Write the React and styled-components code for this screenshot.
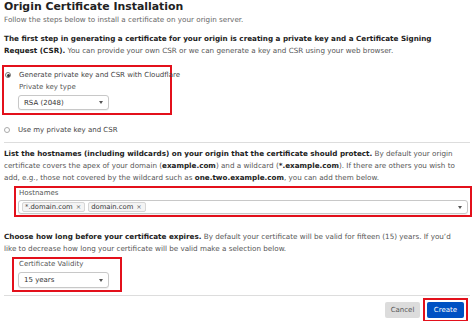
import React from "react";
import styled, { createGlobalStyle } from "styled-components";

const Global = createGlobalStyle`
  html, body { margin: 0; padding: 0; background: #fff; }
  body { font-family: "DejaVu Sans", "Liberation Sans", sans-serif; color: #555; }
  * { box-sizing: border-box; }
`;

const Page = styled.div`
  width: 474px;
  height: 321px;
  overflow: hidden;
  padding: 0 4px;
`;

const Title = styled.h1`
  margin: 0;
  font-size: 10.9px;
  line-height: 13px;
  font-weight: bold;
  color: #222;
`;

const Subtitle = styled.p`
  margin: 1px 0 0;
  font-size: 7.2px;
  line-height: 12px;
  color: #666;
  white-space: nowrap;
`;

const Paragraph = styled.p`
  margin: ${(p) => p.$top}px 0 0;
  font-size: 7.2px;
  line-height: 12px;
  color: #555;
  white-space: nowrap;
  b { color: #222; font-weight: bold; }
`;

const Highlight = styled.div`
  border: 2px solid #e3101b;
  margin: ${(p) => p.$top}px 0 0 ${(p) => p.$left}px;
  width: ${(p) => p.$width}px;
  padding: ${(p) => p.$pad};
  display: flex;
  flex-direction: column;
`;

const RadioRow = styled.label`
  display: grid;
  grid-template-columns: 6px 1fr;
  column-gap: 8px;
  align-items: center;
  height: 12px;
  margin-top: ${(p) => p.$top || 0}px;
  padding-left: ${(p) => p.$indent || 0}px;
  font-size: 7px;
  color: #444;
  white-space: nowrap;
`;

const Radio = styled.span`
  width: 6px;
  height: 6px;
  border-radius: 50%;
  border: 1px solid ${(p) => (p.$checked ? "#777" : "#aaa")};
  background: #fff;
  display: flex;
  align-items: center;
  justify-content: center;
  &::after {
    content: "";
    width: 3px;
    height: 3px;
    border-radius: 50%;
    background: ${(p) => (p.$checked ? "#333" : "transparent")};
  }
`;

const FieldLabel = styled.div`
  margin: ${(p) => p.$top || 0}px 0 0 ${(p) => p.$left || 0}px;
  font-size: 7px;
  line-height: 11px;
  color: #555;
  padding-left: 1px;
  white-space: nowrap;
`;

const Select = styled.div`
  margin: ${(p) => p.$top || 0}px 0 0 ${(p) => p.$left || 0}px;
  width: 91px;
  height: ${(p) => p.$height}px;
  border: 1px solid #c8c8c8;
  border-radius: 3px;
  box-shadow: 0 1px 1px rgba(0, 0, 0, 0.06);
  background: #fff;
  display: flex;
  align-items: center;
  justify-content: space-between;
  padding: 0 5px 0 5px;
  font-size: 7px;
  color: #333;
  white-space: nowrap;
`;

const Caret = styled.span`
  width: 0;
  height: 0;
  border-left: 2.5px solid transparent;
  border-right: 2.5px solid transparent;
  border-top: 3px solid #555;
`;

const Divider = styled.hr`
  margin: ${(p) => p.$top}px 0 0;
  border: 0;
  height: 1px;
  background: #ddd;
  width: 466px;
`;

const MultiSelect = styled.div`
  margin-top: 1px;
  height: 14px;
  border: 1px solid #c8c8c8;
  border-radius: 3px;
  box-shadow: 0 1px 1px rgba(0, 0, 0, 0.06);
  display: flex;
  align-items: center;
  gap: 3px;
  padding: 0 5px 0 3px;
`;

const Chip = styled.span`
  height: 10px;
  display: inline-flex;
  align-items: center;
  gap: 3px;
  padding: 0 3px 0 2px;
  border: 1px solid #d6d6d6;
  border-radius: 2px;
  background: #f4f4f4;
  font-size: 6.8px;
  color: #333;
  white-space: nowrap;
`;

const ChipX = styled.span`
  font-size: 6.5px;
  color: #666;
`;

const Spacer = styled.span`
  flex: 1;
`;

const Footer = styled.div`
  margin-top: 2px;
  display: flex;
  justify-content: flex-end;
  align-items: center;
  gap: 3px;
  padding-right: 2px;
`;

const ButtonFrame = styled.div`
  border: 2px solid #e3101b;
  padding: 2px;
  display: flex;
`;

const Button = styled.button`
  height: 16px;
  width: ${(p) => p.$width}px;
  padding: 0;
  border: 0;
  border-radius: 2px;
  font-family: inherit;
  font-size: 7px;
  background: ${(p) => (p.$primary ? "#0051c3" : "#dcdcdc")};
  color: ${(p) => (p.$primary ? "#fff" : "#555")};
`;

export default function App() {
  return (
    <>
      <Global />
      <Page>
        <Title>Origin Certificate Installation</Title>
        <Subtitle>Follow the steps below to install a certificate on your origin server.</Subtitle>
        <Paragraph $top={7}>
          <b>The first step in generating a certificate for your origin is creating a private key and a Certificate Signing</b>
          <br />
          <b>Request (CSR).</b> You can provide your own CSR or we can generate a key and CSR using your web browser.
        </Paragraph>

        <Highlight $top={8} $left={-2} $width={170} $pad="2px 0 3px 1px">
          <RadioRow>
            <Radio $checked />
            <span>Generate private key and CSR with Cloudflare</span>
          </RadioRow>
          <FieldLabel $top={1} $left={13}>Private key type</FieldLabel>
          <Select $top={2} $left={13} $height={15}>
            <span>RSA (2048)</span>
            <Caret />
          </Select>
        </Highlight>

        <RadioRow $top={9}>
          <Radio />
          <span>Use my private key and CSR</span>
        </RadioRow>

        <Divider $top={6} />

        <Paragraph $top={5}>
          <b>List the hostnames (including wildcards) on your origin that the certificate should protect.</b> By default your origin
          <br />
          certificate covers the apex of your domain (<b>example.com</b>) and a wildcard (<b>*.example.com</b>). If there are others you wish to
          <br />
          add, e.g., those not covered by the wildcard such as <b>one.two.example.com</b>, you can add them below.
        </Paragraph>

        <Highlight $top={2} $left={10} $width={458} $pad="0 2px 1px 2px">
          <FieldLabel>Hostnames</FieldLabel>
          <MultiSelect>
            <Chip>*.domain.com <ChipX>×</ChipX></Chip>
            <Chip>domain.com <ChipX>×</ChipX></Chip>
            <Spacer />
            <Caret />
          </MultiSelect>
        </Highlight>

        <Paragraph $top={14}>
          <b>Choose how long before your certificate expires.</b> By default your certificate will be valid for fifteen (15) years. If you’d
          <br />
          like to decrease how long your certificate will be valid make a selection below.
        </Paragraph>

        <Highlight $top={2} $left={8} $width={110} $pad="0 0 2px 4px">
          <FieldLabel>Certificate Validity</FieldLabel>
          <Select $top={2} $height={16}>
            <span>15 years</span>
            <Caret />
          </Select>
        </Highlight>

        <Divider $top={3} />

        <Footer>
          <Button $width={35}>Cancel</Button>
          <ButtonFrame>
            <Button $primary $width={37}>Create</Button>
          </ButtonFrame>
        </Footer>
      </Page>
    </>
  );
}
